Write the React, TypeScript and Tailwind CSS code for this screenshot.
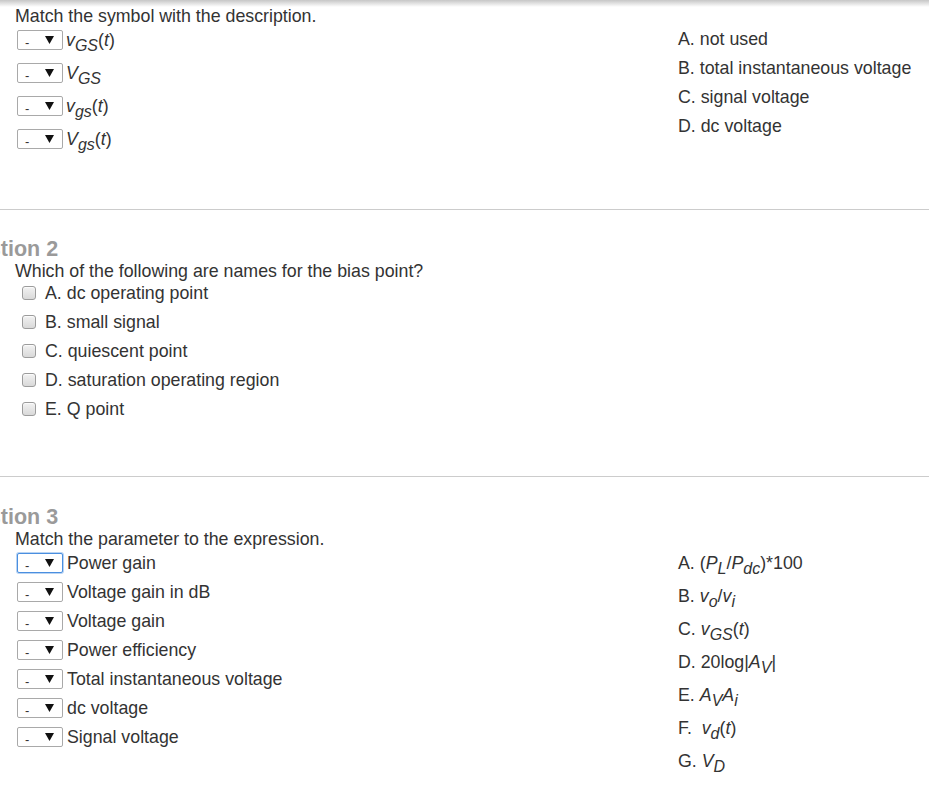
import React from 'react';

const Sub = ({ children }: { children: React.ReactNode }) => (
  <sub className="bottom-[-5px] text-[16px] italic">{children}</sub>
);

const I = ({ children }: { children: React.ReactNode }) => <i className="italic">{children}</i>;

const T = () => (
  <>
    (<i>t</i>)
  </>
);

function Dropdown({ focused }: { focused?: boolean }) {
  return (
    <div
      className={`flex h-[20px] w-[46px] shrink-0 items-center justify-between rounded-[2px] border bg-white pl-[7px] pr-[8px] text-[13px] ${
        focused ? 'border-[#4a8fe0] shadow-[0_0_0_1px_#b9d4f3]' : 'border-[#a9a9a9]'
      }`}
    >
      <span className="mt-[4px] leading-none">-</span>
      <svg width="9" height="8" viewBox="0 0 9 8">
        <polygon points="0,0 9,0 4.5,8" fill="#111" />
      </svg>
    </div>
  );
}

function Checkbox() {
  return (
    <div className="h-[14px] w-[14px] shrink-0 rounded-[3px] border border-[#9c9c9c] bg-gradient-to-b from-[#f2f2f2] to-[#d9d9d9] shadow-[inset_0_1px_1px_rgba(255,255,255,0.8)]" />
  );
}

const q1Left: React.ReactNode[] = [
  <>
    <I>v</I>
    <Sub>GS</Sub>
    <T />
  </>,
  <>
    <I>V</I>
    <Sub>GS</Sub>
  </>,
  <>
    <I>v</I>
    <Sub>gs</Sub>
    <T />
  </>,
  <>
    <I>V</I>
    <Sub>gs</Sub>
    <T />
  </>,
];

const q1Right = ['A. not used', 'B. total instantaneous voltage', 'C. signal voltage', 'D. dc voltage'];

const q2Options = [
  'A. dc operating point',
  'B. small signal',
  'C. quiescent point',
  'D. saturation operating region',
  'E. Q point',
];

const q3Left = [
  'Power gain',
  'Voltage gain in dB',
  'Voltage gain',
  'Power efficiency',
  'Total instantaneous voltage',
  'dc voltage',
  'Signal voltage',
];

const q3Right: React.ReactNode[] = [
  <>
    A. (<I>P</I>
    <Sub>L</Sub>/<I>P</I>
    <Sub>dc</Sub>)*100
  </>,
  <>
    B. <I>v</I>
    <Sub>o</Sub>/<I>v</I>
    <Sub>i</Sub>
  </>,
  <>
    C. <I>v</I>
    <Sub>GS</Sub>
    <T />
  </>,
  <>
    D. 20log|<I>A</I>
    <Sub>V</Sub>|
  </>,
  <>
    E. <I>A</I>
    <Sub>V</Sub>
    <I>A</I>
    <Sub>i</Sub>
  </>,
  <>
    F. &nbsp;<I>v</I>
    <Sub>d</Sub>
    <T />
  </>,
  <>
    G. <I>V</I>
    <Sub>D</Sub>
  </>,
];

function Heading({ n }: { n: number }) {
  return (
    <h3 className="ml-[-53px] whitespace-nowrap text-[21.5px] font-bold leading-[24px] text-[#9a9a9a]">
      Question {n}
    </h3>
  );
}

export default function App() {
  return (
    <div className="relative h-[801px] w-[929px] overflow-hidden bg-white font-['Liberation_Sans',Arial,sans-serif] text-[17.8px] text-[#333]">
      <div className="pointer-events-none absolute inset-x-0 top-0 h-[7px] bg-gradient-to-b from-[#c6c6c6] to-transparent" />

      {/* question 1 */}
      <section className="h-[209px] pt-[6px]">
        <p className="pl-[15px] leading-[20px]">Match the symbol with the description.</p>
        <div className="flex">
          <div className="flex w-[678px] flex-col gap-[13px] pl-[17px] pt-[4px]">
            {q1Left.map((item, i) => (
              <div key={i} className="flex h-[20px] items-center gap-[3px] leading-[20px]">
                <Dropdown />
                <span className="whitespace-nowrap">{item}</span>
              </div>
            ))}
          </div>
          <div className="flex flex-col gap-[9px] pt-[3px] leading-[20px]">
            {q1Right.map((t) => (
              <div key={t} className="whitespace-nowrap">
                {t}
              </div>
            ))}
          </div>
        </div>
      </section>
      <div className="border-t border-[#cccccc]" />

      {/* question 2 */}
      <section className="h-[266px] pt-[27px]">
        <Heading n={2} />
        <p className="pl-[15px] leading-[20px]">Which of the following are names for the bias point?</p>
        <div className="mt-[2px] flex flex-col gap-[9px] pl-[22px]">
          {q2Options.map((o) => (
            <label key={o} className="flex h-[20px] items-center gap-[9px] leading-[20px]">
              <Checkbox />
              <span>{o}</span>
            </label>
          ))}
        </div>
      </section>
      <div className="border-t border-[#cccccc]" />

      {/* question 3 */}
      <section className="pt-[28px]">
        <Heading n={3} />
        <p className="pl-[15px] leading-[20px]">Match the parameter to the expression.</p>
        <div className="flex">
          <div className="flex w-[678px] flex-col gap-[9px] pl-[17px] pt-[4px]">
            {q3Left.map((t, i) => (
              <div key={t} className="flex h-[20px] items-center gap-[4px] leading-[20px]">
                <Dropdown focused={i === 0} />
                <span className="whitespace-nowrap">{t}</span>
              </div>
            ))}
          </div>
          <div className="flex flex-col gap-[13px] pt-[4px] leading-[20px]">
            {q3Right.map((t, i) => (
              <div key={i} className="whitespace-nowrap">
                {t}
              </div>
            ))}
          </div>
        </div>
      </section>
    </div>
  );
}
